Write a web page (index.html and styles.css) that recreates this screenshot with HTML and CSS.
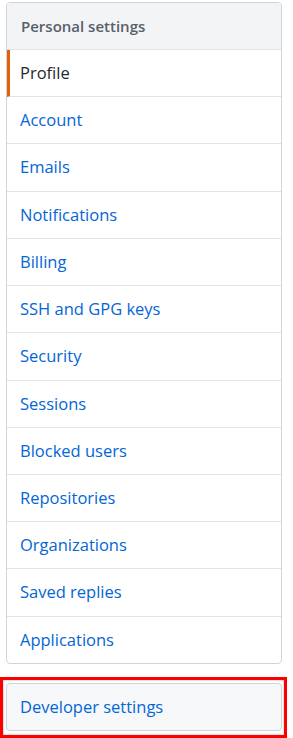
FILE: index.html
```html
<!DOCTYPE html>
<html lang="en">
<head>
  <meta charset="UTF-8">
  <title>Personal settings</title>
  <link rel="stylesheet" href="styles.css">
</head>
<body>
  <nav class="menu">
    <h3 class="menu-heading">Personal settings</h3>
    <a class="menu-item selected" href="#">Profile</a>
    <a class="menu-item" href="#">Account</a>
    <a class="menu-item" href="#">Emails</a>
    <a class="menu-item" href="#">Notifications</a>
    <a class="menu-item" href="#">Billing</a>
    <a class="menu-item" href="#">SSH and GPG keys</a>
    <a class="menu-item" href="#">Security</a>
    <a class="menu-item" href="#">Sessions</a>
    <a class="menu-item" href="#">Blocked users</a>
    <a class="menu-item" href="#">Repositories</a>
    <a class="menu-item" href="#">Organizations</a>
    <a class="menu-item" href="#">Saved replies</a>
    <a class="menu-item" href="#">Applications</a>
  </nav>

  <div class="highlight">
    <nav class="menu dev">
      <a class="menu-item" href="#">Developer settings</a>
    </nav>
  </div>
</body>
</html>
```

FILE: styles.css
```css
body {
  margin: 0;
  padding: 2px 0 0 0;
  font-family: "Open Sans", "Noto Sans", sans-serif;
  background: #fff;
}
.menu {
  margin: 0 11px 0 6px;
  border: 1px solid #d1d5da;
  border-radius: 4px;
  overflow: hidden;
  background: #fff;
}
.menu-heading {
  margin: 0;
  height: 46px;
  line-height: 46px;
  padding: 0 14px;
  font-size: 15px;
  font-weight: 600;
  color: #586069;
  background: #f3f4f6;
  border-bottom: 1px solid #e1e4e8;
}
.menu-item {
  display: block;
  height: 46.23px;
  line-height: 46px;
  padding: 0 13px;
  font-size: 16.5px;
  color: #0366d6;
  text-decoration: none;
  border-bottom: 1px solid #e1e4e8;
}
.menu-item:last-child {
  border-bottom: none;
}
.menu-item.selected {
  color: #24292e;
  padding-left: 10px;
  border-left: 3px solid #e36209;
}
.highlight {
  width: 281px;
  margin-top: 13px;
  border: 3px solid #f00;
  padding: 3px 0 4px 0;
  box-shadow: inset 0 0 2px #9a9a9a;
}
.highlight .menu {
  margin: 0 2px 0 3px;
  background: #f6f8fa;
}
.dev .menu-item {
  height: 46px;
  line-height: 46px;
}
```
